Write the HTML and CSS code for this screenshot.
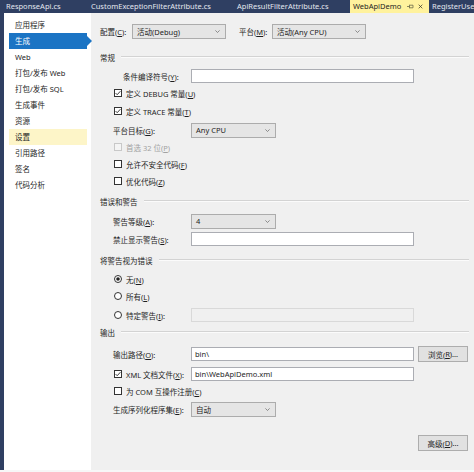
FILE: index.html
```html
<!DOCTYPE html>
<html>
<head>
<meta charset="utf-8">
<link rel="stylesheet" href="styles.css">
</head>
<body>
<div class="window">
  <div class="tabs">
    <div class="tab t1">ResponseApi.cs</div>
    <div class="tab t2">CustomExceptionFilterAttribute.cs</div>
    <div class="tab t3">ApiResultFilterAttribute.cs</div>
    <div class="tab active">
      <span class="tab-name">WebApiDemo</span>
      <svg class="pin" viewBox="0 0 7 5"><path d="M0 2.5H2.5M2.5 0.8V4.2M2.5 1.2H6M2.5 3.8H6M6 1.2V3.8" stroke="#6b6b4a" stroke-width="0.8" fill="none"/></svg>
      <svg class="close" viewBox="0 0 6 6"><path d="M0.8 0.8L5.2 5.2M5.2 0.8L0.8 5.2" stroke="#3b3b2a" stroke-width="0.9"/></svg>
    </div>
    <div class="tab t5">RegisterUse</div>
  </div>
  <div class="body">
    <div class="nav">
      <div class="nav-item">应用程序</div>
      <div class="nav-item selected">生成</div>
      <div class="nav-item">Web</div>
      <div class="nav-item">打包/发布 Web</div>
      <div class="nav-item">打包/发布 SQL</div>
      <div class="nav-item">生成事件</div>
      <div class="nav-item">资源</div>
      <div class="nav-item hover">设置</div>
      <div class="nav-item">引用路径</div>
      <div class="nav-item">签名</div>
      <div class="nav-item">代码分析</div>
    </div>
    <div class="main">
      <div class="cfg-row">
        <span class="cfg-label">配置(<u>C</u>):</span>
        <div class="combo cfg-combo"><span>活动(Debug)</span><svg class="chev" viewBox="0 0 5 3"><path d="M0.4 0.4L2.5 2.5L4.6 0.4" stroke="#666" stroke-width="0.7" fill="none"/></svg></div>
        <span class="cfg-label second">平台(<u>M</u>):</span>
        <div class="combo cfg-combo"><span>活动(Any CPU)</span><svg class="chev" viewBox="0 0 5 3"><path d="M0.4 0.4L2.5 2.5L4.6 0.4" stroke="#666" stroke-width="0.7" fill="none"/></svg></div>
      </div>

      <div class="group-header g-general"><span>常规</span><div class="rule"></div></div>

      <div class="field-row indent2 gap3">
        <span class="label short">条件编译符号(<u>Y</u>):</span>
        <div class="input wide"></div>
      </div>
      <div class="check-row gap1">
        <svg class="cb" viewBox="0 0 8 8"><rect x="0.5" y="0.5" width="7" height="7" fill="#fff" stroke="#333"/><path d="M1.6 4.1L3.2 5.7L6.4 2.2" stroke="#222" stroke-width="0.9" fill="none"/></svg>
        <span>定义 DEBUG 常量(<u>U</u>)</span>
      </div>
      <div class="check-row gap2">
        <svg class="cb" viewBox="0 0 8 8"><rect x="0.5" y="0.5" width="7" height="7" fill="#fff" stroke="#333"/><path d="M1.6 4.1L3.2 5.7L6.4 2.2" stroke="#222" stroke-width="0.9" fill="none"/></svg>
        <span>定义 TRACE 常量(<u>T</u>)</span>
      </div>
      <div class="field-row gap3">
        <span class="label">平台目标(<u>G</u>):</span>
        <div class="combo narrow"><span>Any CPU</span><svg class="chev" viewBox="0 0 5 3"><path d="M0.4 0.4L2.5 2.5L4.6 0.4" stroke="#666" stroke-width="0.7" fill="none"/></svg></div>
      </div>
      <div class="check-row disabled gap1">
        <svg class="cb" viewBox="0 0 8 8"><rect x="0.5" y="0.5" width="7" height="7" fill="#f4f4f4" stroke="#c8c8c8"/></svg>
        <span>首选 32 位(<u>P</u>)</span>
      </div>
      <div class="check-row gap1">
        <svg class="cb" viewBox="0 0 8 8"><rect x="0.5" y="0.5" width="7" height="7" fill="#fff" stroke="#333"/></svg>
        <span>允许不安全代码(<u>F</u>)</span>
      </div>
      <div class="check-row gap1">
        <svg class="cb" viewBox="0 0 8 8"><rect x="0.5" y="0.5" width="7" height="7" fill="#fff" stroke="#333"/></svg>
        <span>优化代码(<u>Z</u>)</span>
      </div>

      <div class="group-header g-errors"><span>错误和警告</span><div class="rule"></div></div>
      <div class="field-row gap4">
        <span class="label">警告等级(<u>A</u>):</span>
        <div class="combo narrow"><span>4</span><svg class="chev" viewBox="0 0 5 3"><path d="M0.4 0.4L2.5 2.5L4.6 0.4" stroke="#666" stroke-width="0.7" fill="none"/></svg></div>
      </div>
      <div class="field-row gap2">
        <span class="label">禁止显示警告(<u>S</u>):</span>
        <div class="input wide"></div>
      </div>

      <div class="group-header g-treat"><span>将警告视为错误</span><div class="rule"></div></div>
      <div class="check-row radio gap3">
        <svg class="cb" viewBox="0 0 8 8"><circle cx="4" cy="4" r="3.5" fill="#fff" stroke="#333"/><circle cx="4" cy="4" r="1.8" fill="#222"/></svg>
        <span>无(<u>N</u>)</span>
      </div>
      <div class="check-row radio gap1">
        <svg class="cb" viewBox="0 0 8 8"><circle cx="4" cy="4" r="3.5" fill="#fff" stroke="#333"/></svg>
        <span>所有(<u>L</u>)</span>
      </div>
      <div class="check-row radio gap3">
        <svg class="cb" viewBox="0 0 8 8"><circle cx="4" cy="4" r="3.5" fill="#fff" stroke="#333"/></svg>
        <span class="radio-label">特定警告(<u>I</u>):</span>
        <div class="input wide disabled-input"></div>
      </div>

      <div class="group-header g-output"><span>输出</span><div class="rule"></div></div>
      <div class="field-row gap6">
        <span class="label">输出路径(<u>O</u>):</span>
        <div class="input wide"><span>bin\</span></div>
        <div class="button browse">浏览(<u>R</u>)...</div>
      </div>
      <div class="check-row gap4">
        <svg class="cb" viewBox="0 0 8 8"><rect x="0.5" y="0.5" width="7" height="7" fill="#fff" stroke="#333"/><path d="M1.6 4.1L3.2 5.7L6.4 2.2" stroke="#222" stroke-width="0.9" fill="none"/></svg>
        <span class="radio-label">XML 文档文件(<u>X</u>):</span>
        <div class="input wide"><span>bin\WebApiDemo.xml</span></div>
      </div>
      <div class="check-row gap1">
        <svg class="cb" viewBox="0 0 8 8"><rect x="0.5" y="0.5" width="7" height="7" fill="#fff" stroke="#333"/></svg>
        <span>为 COM 互操作注册(<u>C</u>)</span>
      </div>
      <div class="field-row gap2">
        <span class="label">生成序列化程序集(<u>E</u>):</span>
        <div class="combo narrow"><span>自动</span><svg class="chev" viewBox="0 0 5 3"><path d="M0.4 0.4L2.5 2.5L4.6 0.4" stroke="#666" stroke-width="0.7" fill="none"/></svg></div>
      </div>
      <div class="adv-row">
        <div class="button">高级(<u>D</u>)...</div>
      </div>
    </div>
  </div>
</div>
</body>
</html>
```
FILE: styles.css
```css
* { box-sizing: border-box; }
html, body { margin: 0; padding: 0; }
body {
  width: 474px;
  height: 472px;
  overflow: hidden;
  background: #f7f7f7;
  font-family: "Noto Sans", "Noto Sans CJK SC", sans-serif;
  font-size: 7.5px;
  color: #1e1e1e;
}
.window { width: 474px; height: 472px; display: flex; flex-direction: column; }

/* tabs */
.tabs {
  height: 13px;
  flex: none;
  display: flex;
  background: #2f3f62;
  overflow: hidden;
  white-space: nowrap;
}
.tab {
  flex: none;
  height: 13px;
  line-height: 13px;
  padding-left: 6px;
  color: #e3e7ef;
}
.t1 { width: 85px; }
.t2 { width: 146px; }
.t3 { width: 119px; }
.t5 { width: 45px; padding-left: 3px; overflow: hidden; }
.tab.active {
  width: 79px;
  padding-left: 3px;
  background: #fff29d;
  color: #1e1e1e;
  display: flex;
  align-items: center;
}
.tab-name { width: 54px; }
.pin { width: 7px; height: 5px; margin-right: 4px; }
.close { width: 5px; height: 5px; }

/* body */
.body {
  flex: none;
  height: 457px;
  display: flex;
  background: #2f3f62;
  padding-left: 4px;
}
.nav {
  width: 87px;
  flex: none;
  background: #fff;
  padding-top: 4px;
}
.nav-item {
  position: relative;
  margin-left: 5px;
  width: 78px;
  height: 16px;
  line-height: 16px;
  padding-left: 6px;
  color: #1e1e1e;
}
.nav-item.selected {
  background: #1b74c4;
  color: #fff;
}
.nav-item.selected::after {
  content: "";
  position: absolute;
  right: -5px;
  top: 3px;
  border-left: 5px solid #1b74c4;
  border-top: 5px solid transparent;
  border-bottom: 5px solid transparent;
}
.nav-item.hover { background: #fdf5c8; }

.main {
  flex: 1;
  background: #f0f0f0;
  padding-left: 9px;
  padding-right: 5px;
  display: flex;
  flex-direction: column;
}

/* config */
.cfg-row {
  height: 16px;
  margin-top: 10px;
  display: flex;
  align-items: center;
}
.cfg-label { width: 32px; flex: none; }
.cfg-label.second { margin-left: 13px; width: 33px; }
.cfg-combo { width: 94px; }

.combo {
  height: 15px;
  background: #e5e5e5;
  border: 1px solid #acacac;
  display: flex;
  align-items: center;
  justify-content: space-between;
  padding: 0 5px 0 4px;
  flex: none;
}
.chev { width: 5px; height: 3px; }
.combo.narrow { width: 85px; }

.group-header {
  height: 16px;
  display: flex;
  align-items: center;
}
.group-header .rule {
  flex: 1;
  margin-left: 6px;
  margin-right: 0;
  height: 2px;
  border-top: 1px solid #d3d3d3;
  border-bottom: 1px solid #fbfbfb;
}
.g-general { margin-top: 10px; }
.g-errors { margin-top: 4px; }
.g-treat { margin-top: 5px; }
.g-output { margin-top: 1px; }

.field-row {
  height: 16px;
  display: flex;
  align-items: center;
  padding-left: 13px;
}
.label { width: 78px; flex: none; }
.indent2 { padding-left: 23px; }
.label.short { width: 68px; }

.input {
  height: 14px;
  background: #fff;
  border: 1px solid #abadb3;
  display: flex;
  align-items: center;
  padding-left: 3px;
  flex: none;
}
.input.wide { width: 223px; }
.input.disabled-input { background: #f0f0f0; border-color: #d9d9d9; }

.check-row {
  height: 16px;
  display: flex;
  align-items: center;
  padding-left: 14px;
}
.cb { width: 8px; height: 8px; flex: none; margin-right: 4px; }
.check-row.disabled { color: #a2a2a2; }
.radio-label { width: 65px; flex: none; }

.button {
  width: 50px;
  height: 16px;
  background: #e1e1e1;
  border: 1px solid #adadad;
  display: flex;
  align-items: center;
  justify-content: center;
  flex: none;
}
.browse { margin-left: 4px; }
.adv-row {
  height: 16px;
  margin-top: 18px;
  display: flex;
  justify-content: flex-end;
  padding-right: 1px;
}

.gap1 { margin-top: 1px; }
.gap2 { margin-top: 2px; }
.gap3 { margin-top: 3px; }
.gap4 { margin-top: 4px; }
.gap6 { margin-top: 6px; }
u { text-decoration: underline; }
```
